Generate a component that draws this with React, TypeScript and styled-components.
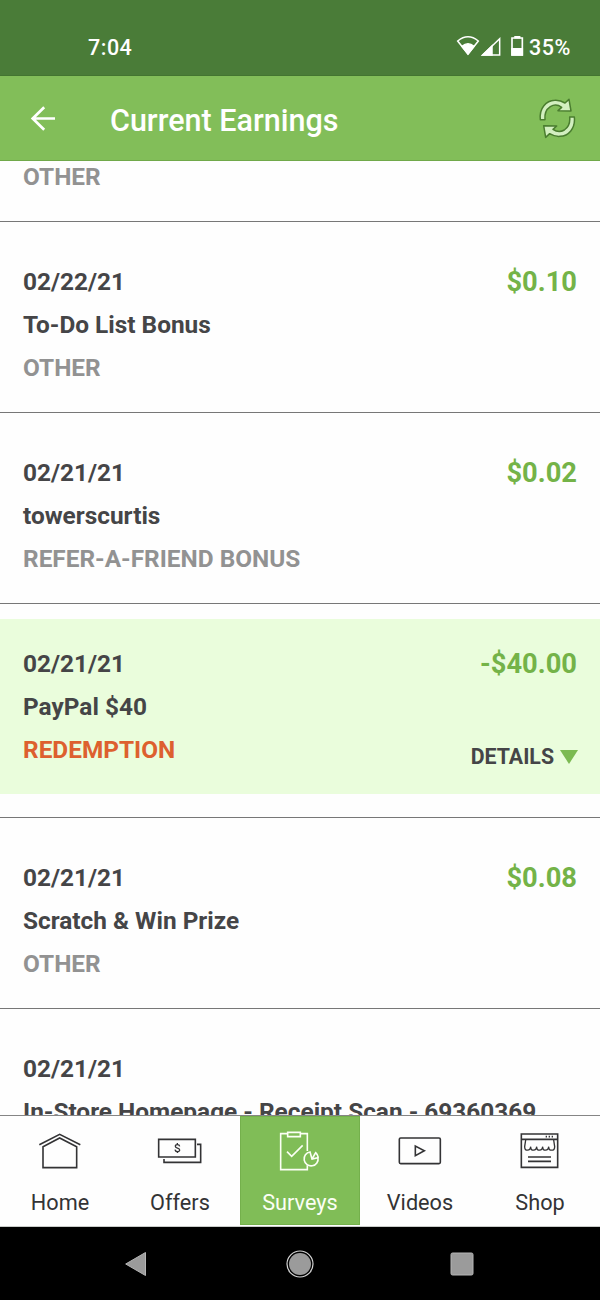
import React from 'react';
import styled, { createGlobalStyle } from 'styled-components';

const GlobalStyle = createGlobalStyle`
  * { box-sizing: border-box; }
  body { margin: 0; background: #fff; font-family: Roboto, "Liberation Sans", sans-serif; }
`;

const Screen = styled.div`
  display: flex;
  flex-direction: column;
  width: 600px;
  height: 1300px;
  overflow: hidden;
  background: #fefefe;
`;

const StatusBar = styled.header`
  display: flex;
  flex: none;
  justify-content: space-between;
  height: 76px;
  padding: 34px 29px 0 88px;
  background: #4a7c38;
  border-bottom: 1px solid #437530;
  color: #fff;
  font-size: 21.5px;
  font-weight: 500;
  line-height: 27px;
`;

const Clock = styled.span`
  letter-spacing: 0.5px;
`;

const StatusGroup = styled.div`
  display: flex;
  align-items: flex-start;
  gap: 5px;
  letter-spacing: 0.6px;
`;

const AppBar = styled.div`
  display: flex;
  flex: none;
  align-items: center;
  height: 85px;
  padding: 0 24px 0 30px;
  background: #82be59;
  border-bottom: 1px solid #70a94a;
`;

const Title = styled.h1`
  flex: 1;
  margin: 5px 0 0 54px;
  color: #fff;
  font-size: 30.5px;
  font-weight: 500;
  line-height: 40px;
`;

const Viewport = styled.main`
  flex: 1;
  overflow: hidden;
`;

const List = styled.ul`
  margin: -44px 0 0;
  padding: 0;
  list-style: none;
`;

const Row = styled.li<{ $highlight?: boolean }>`
  padding: 15px 0 ${p => (p.$highlight ? 23 : 0)}px;
  border-bottom: 1px solid #777;
`;

const Entry = styled.div<{ $highlight?: boolean }>`
  display: flex;
  justify-content: space-between;
  padding: 23px;
  background: ${p => (p.$highlight ? '#eafddc' : 'transparent')};
`;

const Lines = styled.div`
  display: flex;
  flex-direction: column;
`;

const tones = { dark: '#454547', muted: '#929292', alert: '#dd602f' };

const Line = styled.span<{ $tone?: keyof typeof tones }>`
  color: ${p => tones[p.$tone ?? 'dark']};
  font-size: 24.4px;
  font-weight: 700;
  line-height: 43px;
  white-space: nowrap;
`;

const Side = styled.div`
  display: flex;
  flex-direction: column;
  align-items: flex-end;
  justify-content: space-between;
`;

const Amount = styled.span`
  color: #74b348;
  font-size: 27.3px;
  font-weight: 700;
  line-height: 45px;
`;

const Details = styled.button`
  display: flex;
  align-items: center;
  gap: 6px;
  margin: 0 -1px -1px 0;
  padding: 0;
  border: 0;
  background: none;
  color: #454547;
  font: 700 21.3px/30px Roboto, sans-serif;
`;

const TabBar = styled.nav`
  display: grid;
  flex: none;
  grid-template-columns: repeat(5, 1fr);
  height: 112px;
  border-top: 1px solid #858585;
  border-bottom: 1px solid #c9ccc9;
  background: #fefefe;
`;

const Tab = styled.a<{ $active?: boolean }>`
  display: flex;
  flex-direction: column;
  align-items: center;
  height: 109px;
  padding-top: 12px;
  gap: 16px;
  background: ${p => (p.$active ? '#80bd57' : 'transparent')};
  box-shadow: ${p => (p.$active ? 'inset 0 0 0 1px #74b04c' : 'none')};
  color: ${p => (p.$active ? '#fbfff5' : '#333335')};
  font-size: 21.7px;
  line-height: 30px;
`;

const TabIcon = styled.svg`
  width: 48px;
  height: 44px;
  fill: none;
  stroke: currentColor;
  stroke-width: 4.8;
`;

const SystemBar = styled.footer`
  display: flex;
  flex: none;
  align-items: center;
  justify-content: space-between;
  height: 73px;
  padding: 0 126px 0 125px;
  background: #000;
`;

const HomeButton = styled.svg`
  margin-left: 2px;
`;

type Item = { date?: string; name?: string; kind?: string; amount?: string; redeemed?: boolean };

const items: Item[] = [
  { kind: 'OTHER' },
  { date: '02/22/21', name: 'To-Do List Bonus', kind: 'OTHER', amount: '$0.10' },
  { date: '02/21/21', name: 'towerscurtis', kind: 'REFER-A-FRIEND BONUS', amount: '$0.02' },
  { date: '02/21/21', name: 'PayPal $40', kind: 'REDEMPTION', amount: '-$40.00', redeemed: true },
  { date: '02/21/21', name: 'Scratch & Win Prize', kind: 'OTHER', amount: '$0.08' },
  { date: '02/21/21', name: 'In-Store Homepage - Receipt Scan - 69360369' },
];

const tabs = [
  {
    label: 'Home',
    box: '108 84 144 132',
    art: (
      <>
        <path d="M118 134 179 103 241 134" />
        <path d="M129 203V140L179 114 230 140V203Z" />
      </>
    ),
  },
  {
    label: 'Offers',
    box: '468 84 144 132',
    art: (
      <>
        <path d="M476 118H586V171H476Z" />
        <path d="M591 133H602V187H492V177" />
        <path strokeWidth="4" d="M539 139C538 132 526 132 526 139C526 146 539 143 539 150C539 157 526 157 525 149M532 129V134M532 154V159" />
      </>
    ),
  },
  {
    label: 'Surveys',
    box: '138 84 144 132',
    active: true,
    art: (
      <>
        <path d="M173 101H152V209H232V196M232 153V101H211" />
        <path d="M173 97H211V110H173Z" />
        <path d="M171 155 185 169 218 136" />
        <path d="M240 156A21 21 0 1 0 264 173L246 177Z" />
        <path d="M246 177 257 158Q263 163 265 173" />
      </>
    ),
  },
  {
    label: 'Videos',
    box: '498 84 144 132',
    art: (
      <>
        <rect x="508" y="114" width="123" height="77" rx="4" />
        <path d="M556 138V167L583 152Z" />
      </>
    ),
  },
  {
    label: 'Shop',
    box: '168 84 144 132',
    art: (
      <>
        <path d="M184 102H293V202H184ZM184 118H293" />
        <path d="M257 110H261M266 110H270M275 110H279" />
        <path strokeWidth="4" d="M197 120 194 140C194 154 211 154 212 140C212 154 229 154 230 140C230 154 247 154 248 140C248 154 265 154 266 140C266 154 284 154 284 140L281 120" />
        <path d="M204 171H273M204 184H273" />
      </>
    ),
  },
];

const arrow =
  'M332 300C328 265 350 243 375 242C388 241 398 245 406 250L418 239 424 274 385 273 396 263C385 255 372 255 362 261C350 269 344 282 346 300Z';

export default function App() {
  return (
    <Screen>
      <GlobalStyle />
      <StatusBar>
        <Clock>7:04</Clock>
        <StatusGroup>
          <svg width="68" height="22" viewBox="75 42 204 66" fill="none" stroke="#fff" strokeWidth="4.5">
            <path d="M80 63Q111 38 142 63L111 102Z" />
            <path d="M93 79Q111 63 129 79L111 102Z" fill="#fff" />
            <path d="M155 105 206 56V105Z" />
            <path d="M155 105 183 78V105Z" fill="#fff" />
            <path d="M243 54H274V105H243Z" strokeWidth="5" />
            <path d="M243 86H274V105H243ZM252 50H266V53H252Z" fill="#fff" />
          </svg>
          <span>35%</span>
        </StatusGroup>
      </StatusBar>
      <AppBar>
        <svg width="26" height="26" viewBox="0 0 26 26" fill="none" stroke="#fff" strokeWidth="2.7">
          <path d="M25 13.5H3M14.2 2.2 2.7 13.5 14.2 24.8" />
        </svg>
        <Title>Current Earnings</Title>
        <svg width="38" height="42" viewBox="325 232 114 126" fill="#d3efc0" stroke="#4a7d2f" strokeWidth="4.5" strokeLinejoin="round">
          <path d={arrow} />
          <path d={arrow} transform="rotate(180 383 296)" />
        </svg>
      </AppBar>
      <Viewport>
        <List>
          {items.map((item, i) => (
            <Row key={i} $highlight={item.redeemed}>
              <Entry $highlight={item.redeemed}>
                <Lines>
                  {item.date && <Line>{item.date}</Line>}
                  {item.name && <Line>{item.name}</Line>}
                  {item.kind && <Line $tone={item.redeemed ? 'alert' : 'muted'}>{item.kind}</Line>}
                </Lines>
                <Side>
                  {item.amount && <Amount>{item.amount}</Amount>}
                  {item.redeemed && (
                    <Details>
                      DETAILS
                      <svg width="18" height="14" viewBox="0 0 18 14" fill="#7cba52">
                        <path d="M0 0H18L9 14Z" />
                      </svg>
                    </Details>
                  )}
                </Side>
              </Entry>
            </Row>
          ))}
        </List>
      </Viewport>
      <TabBar>
        {tabs.map(tab => (
          <Tab key={tab.label} $active={tab.active}>
            <TabIcon viewBox={tab.box}>{tab.art}</TabIcon>
            {tab.label}
          </Tab>
        ))}
      </TabBar>
      <SystemBar>
        <svg width="22" height="26" viewBox="0 0 22 26" fill="#9b9b9b" stroke="#b5b5b5" strokeLinejoin="round">
          <path d="M0.7 13 20.5 1.5V24.5Z" />
        </svg>
        <HomeButton width="28" height="28" viewBox="0 0 28 28" fill="#9b9b9b">
          <circle cx="14" cy="14" r="11" />
          <circle cx="14" cy="14" r="13" fill="none" stroke="#d5d5d5" strokeWidth="1.2" />
        </HomeButton>
        <svg width="24" height="24" viewBox="0 0 24 24" fill="#9b9b9b" stroke="#b5b5b5">
          <rect x="1" y="1" width="22" height="22" rx="1.5" />
        </svg>
      </SystemBar>
    </Screen>
  );
}
